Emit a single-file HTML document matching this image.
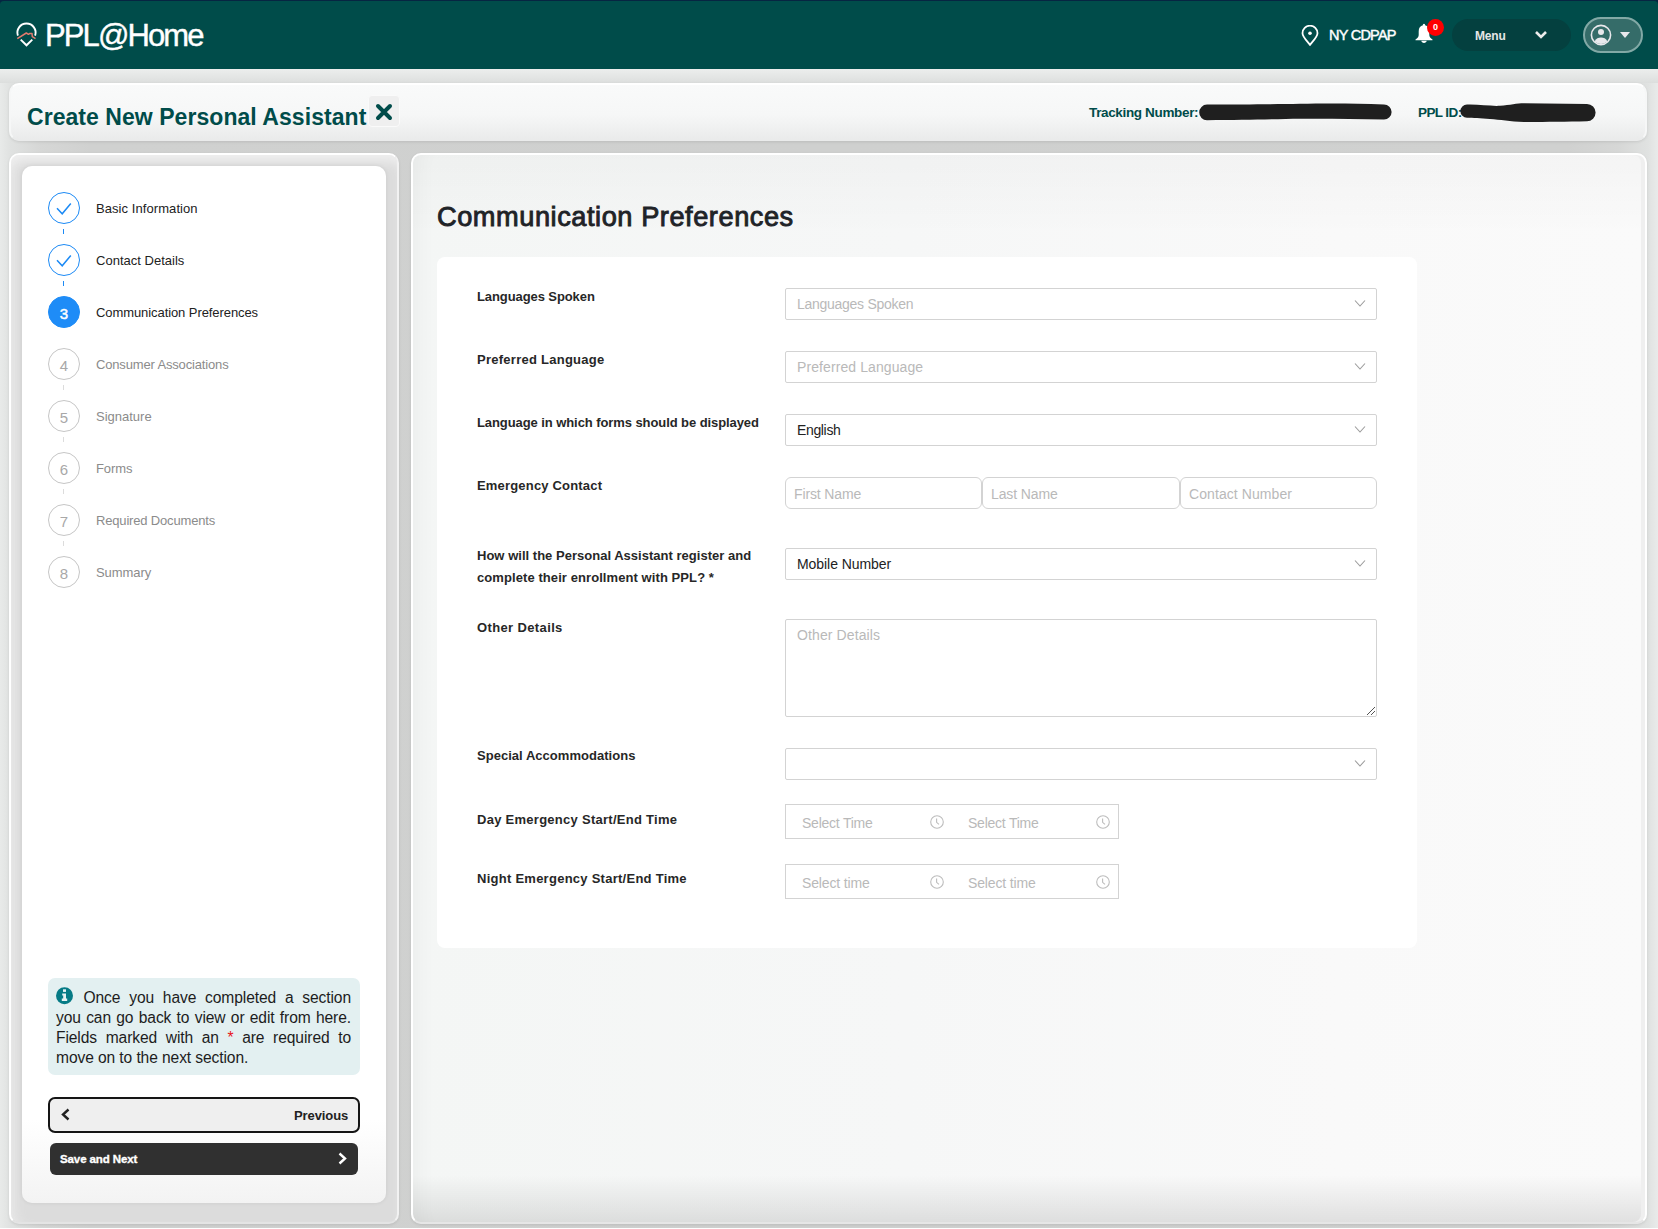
<!DOCTYPE html>
<html><head><meta charset="utf-8">
<style>
*{box-sizing:border-box;margin:0;padding:0}
html,body{width:1658px;height:1229px;overflow:hidden}
body{font-family:"Liberation Sans",sans-serif;background:linear-gradient(to right,#e8eae9 0,#e0e2e1 10px,#d6d7d6 40px,#d0d1d0 90px,#cfd0cf 50%,#d0d1d0 calc(100% - 90px),#d6d7d6 calc(100% - 40px),#e0e2e1 calc(100% - 10px),#e9ebea 100%);position:relative}
#topband{left:0;top:69px;width:1658px;height:14px;background:linear-gradient(#eceeed,#e3e5e4 60%,#dcdedd)}
.abs{position:absolute}
#hdr{left:0;top:0;width:1658px;height:69px;background:#004c4a;border-top:1px solid #062542;border-radius:4px 4px 0 0}
#hdrbg{left:0;top:0;width:1658px;height:8px;background:#062542}
#logo{left:12px;top:18px}
#brand{left:45px;top:18.5px;color:#fff;font-size:31px;letter-spacing:-1.9px;line-height:34px;-webkit-text-stroke:0.4px #fff}
#loc{left:1301px;top:25px}
#loctxt{left:1329px;top:27px;color:#fff;font-weight:normal;font-size:14.5px;letter-spacing:-0.75px;line-height:16px;-webkit-text-stroke:0.45px #fff}
#bell{left:1414px;top:23px}
#badge{left:1427px;top:18.5px;width:17px;height:17px;border-radius:50%;background:#fe0000;color:#fff;font-size:9px;font-weight:bold;text-align:center;line-height:17px}
#menu{left:1452px;top:19px;width:119px;height:32px;border-radius:16px;background:#04403f}
#menutxt{left:1475px;top:29px;color:#e6e6e6;font-weight:bold;font-size:12px;line-height:14px;letter-spacing:-0.2px}
#menuchev{left:1534px;top:30px}
#av{left:1583px;top:17px;width:60px;height:36px;border-radius:18px;background:#356c69;border:2px solid #82a9a6}

.card{background:#f6f7f7;border-radius:10px;box-shadow:0 1px 3px rgba(0,0,0,.10);border:2px solid #fff}
#tcard{left:9px;top:83px;width:1638px;height:58px;background:linear-gradient(#f9fafa 0,#f6f7f7 55%,#eaebeb 100%);border-color:#fff #f6f7f7 #eaebeb #f6f7f7}
#ttl{left:27px;top:103px;color:#004c4a;font-weight:bold;font-size:23px;line-height:28px;letter-spacing:0.05px}
#xbtn{left:368px;top:95px;width:32px;height:32px;background:#efefef;border:1px solid #fafafa;border-radius:4px}
#trk{left:1089px;top:104.5px;color:#004c4a;font-weight:bold;font-size:13.5px;line-height:16px;letter-spacing:-0.35px}
#pplid{left:1418px;top:104.5px;color:#004c4a;font-weight:bold;font-size:13.5px;line-height:16px;letter-spacing:-0.6px}

#side{left:9px;top:153px;width:390px;height:1071px;background:#dcdcdc;box-shadow:0 1px 3px rgba(0,0,0,.10),inset 0 12px 12px -6px #f0f0f0,inset 12px 0 12px -8px #e8e8e8;border-bottom-color:#e4e4e4;border-right-color:#f2f2f2}
#sidein{left:22px;top:166px;width:364px;height:1037px;background:linear-gradient(#fff 0,#fff 92%,#f3f3f3 100%);border-radius:10px;box-shadow:0 0 4px rgba(0,0,0,.08)}
#main{left:411px;top:153px;width:1236px;height:1071px;background:linear-gradient(rgba(0,0,0,.025) 0,rgba(0,0,0,0) 80px,rgba(0,0,0,0) 1020px,rgba(0,0,0,.1) 100%),linear-gradient(to right,#f4f6f5 0,#f6f7f7 40%,#f9f9f9 75%,#fafafa 100%);box-shadow:0 1px 3px rgba(0,0,0,.10),inset 24px 0 20px -18px rgba(0,0,0,.035),inset -4px 0 0 0 #efefef;border-bottom-color:#e6e6e6}

.step{position:absolute;left:48px;width:32px;height:32px;border-radius:50%;border:1px solid #c6c6c6;color:#a8a8a8;font-size:15px;text-align:center;line-height:34px}
.step.done{border-color:#1c8af5}
.step.cur{background:#1e8cf7;border-color:#1e8cf7;color:#fff;-webkit-text-stroke:0.5px #fff;line-height:33px}
.slab{position:absolute;left:96px;font-size:13px;line-height:18px;color:#8b8b8b;letter-spacing:-0.05px}
.slab.dk{color:#222}
.dash{position:absolute;left:63px;width:1px;height:5px;background:#dcdcdc}
.dash.b{background:#1c8af5}

#info{left:48px;top:978px;width:312px;height:97px;background:#e3f0f1;border-radius:7px}
#infotxt{left:56px;top:988px;width:295px;font-size:15.6px;line-height:20px;color:#1d1d1d;text-align:justify;letter-spacing:-0.1px}
#prev{left:48px;top:1097px;width:312px;height:36px;background:#efefef;border:2px solid #151515;border-radius:7px}
#prevtxt{left:294px;top:1107.5px;font-weight:bold;font-size:13px;line-height:16px;color:#222;letter-spacing:-0.1px}
#save{left:50px;top:1143px;width:308px;height:32px;background:#303030;border-radius:6px}
#savetxt{left:60px;top:1152px;font-weight:bold;font-size:11.5px;line-height:14px;color:#fff;letter-spacing:-0.1px;-webkit-text-stroke:0.35px #fff}

#cph{left:437px;top:201px;font-weight:normal;font-size:27.2px;line-height:32px;color:#1f2327;letter-spacing:0.55px;-webkit-text-stroke:0.9px #1f2327}
#form{left:437px;top:257px;width:980px;height:691px;background:#fff;border-radius:8px}
.lab{position:absolute;left:477px;font-weight:bold;font-size:13px;line-height:22px;color:#272727;letter-spacing:-0.05px}
.fld{position:absolute;left:785px;width:592px;height:32px;border:1px solid #d3d3d3;border-radius:2px;background:#fff}
.ph{position:absolute;font-size:14px;line-height:16px;color:#b9b9b9;letter-spacing:-0.1px}
.val{position:absolute;font-size:14px;line-height:16px;color:#222;letter-spacing:-0.1px}
.chev{position:absolute}
.inp{position:absolute;height:32px;border:1px solid #d3d3d3;border-radius:6px;background:#fff}
.tbox{position:absolute;left:785px;width:334px;height:35px;border:1px solid #d3d3d3;background:#fff}
</style></head><body>

<div id="hdrbg" class="abs"></div>
<div id="hdr" class="abs"></div>
<svg id="logo" class="abs" width="30" height="32" viewBox="0 0 30 32">
  <path d="M5.9 17.6 A9.1 9.1 0 1 1 23.1 17.6" fill="none" stroke="#fff" stroke-width="1.9"/>
  <path d="M8.7 21.6 L14.5 27.3 L20.3 21.6" fill="none" stroke="#fff" stroke-width="1.9"/>
  <path d="M5.3 20.6 L14.3 15 L16.5 16.3 L17.8 15.4 L20 15.4 L20.3 18.6 L23.5 20.6" fill="none" stroke="#e27a6e" stroke-width="1.5" stroke-linejoin="round"/>
</svg>
<div id="brand" class="abs">PPL@Home</div>

<svg id="loc" class="abs" width="18" height="21" viewBox="0 0 18 21">
  <path d="M9 19.8 C5 15 1.5 11.5 1.5 8.2 A7.5 7.5 0 0 1 16.5 8.2 C16.5 11.5 13 15 9 19.8 Z" fill="none" stroke="#fff" stroke-width="1.8"/>
  <circle cx="9" cy="8.3" r="1.8" fill="#fff"/>
</svg>
<div id="loctxt" class="abs">NY CDPAP</div>
<svg id="bell" class="abs" width="20" height="22" viewBox="0 0 20 22">
  <path d="M10 0.8 C10.9 0.8 11.2 1.6 11.1 2.3 C13.8 2.9 15.3 5.2 15.3 8.3 L15.3 12 C15.3 13.8 16.5 15.3 18.5 16.6 L18.5 17.2 L1.5 17.2 L1.5 16.6 C3.5 15.3 4.7 13.8 4.7 12 L4.7 8.3 C4.7 5.2 6.2 2.9 8.9 2.3 C8.8 1.6 9.1 0.8 10 0.8 Z" fill="#fff"/>
  <path d="M7.3 17.8 L12.7 17.8 C12.5 19.2 11.5 19.9 10 19.9 C8.5 19.9 7.5 19.2 7.3 17.8 Z" fill="#fff"/>
</svg>
<div id="badge" class="abs">0</div>
<div id="menu" class="abs"></div>
<div id="menutxt" class="abs">Menu</div>
<svg id="menuchev" class="abs" width="14" height="10" viewBox="0 0 14 10"><path d="M2 2 L7 7 L12 2" fill="none" stroke="#ececec" stroke-width="2.6"/></svg>
<div id="av" class="abs"></div>
<svg class="abs" style="left:1590px;top:24px" width="22" height="22" viewBox="0 0 22 22">
  <circle cx="11" cy="11" r="9.6" fill="none" stroke="#e8e8ec" stroke-width="1.6"/>
  <circle cx="11" cy="8" r="3" fill="#e8e8ec"/>
  <path d="M4.6 17.5 C6 14.6 8.5 13.6 11 13.6 C13.5 13.6 16 14.6 17.4 17.5 A9.6 9.6 0 0 1 4.6 17.5 Z" fill="#e8e8ec"/>
</svg>
<svg class="abs" style="left:1620px;top:32px" width="10" height="6" viewBox="0 0 10 6"><path d="M0 0 L10 0 L5 6 Z" fill="#e8e8ec"/></svg>

<div id="topband" class="abs"></div>
<div id="tcard" class="abs card"></div>
<div id="ttl" class="abs">Create New Personal Assistant</div>
<div id="xbtn" class="abs"></div>
<svg class="abs" style="left:375px;top:103px" width="18" height="18" viewBox="0 0 18 18"><path d="M3 3 L15 15 M15 3 L3 15" stroke="#004c4a" stroke-width="4" stroke-linecap="round"/></svg>
<div id="trk" class="abs">Tracking Number:</div>
<svg class="abs" style="left:1195px;top:100px" width="205" height="26" viewBox="0 0 205 26"><path d="M12 4.6 C50 4.3 80 4.3 105 3.8 C130 3.3 160 3.3 189 4.4 A7.6 7.6 0 0 1 189 19.6 C160 19 130 18.5 105 18.8 C80 19.2 50 20 12 20.2 A7.8 7.8 0 0 1 12 4.6 Z" fill="#1f1f1f"/></svg>
<div id="pplid" class="abs">PPL ID:</div>
<svg class="abs" style="left:1455px;top:98px" width="150" height="28" viewBox="0 0 150 28"><path d="M12 6.6 C25 6.3 35 8.3 45 7.8 C55 7 62 5.2 69 5.2 L132 6 A8.6 8.6 0 0 1 132 23.2 C110 23.6 85 24 69 23.9 C55 23.6 45 21.6 35 21 C25 20.4 18 20 12 19.8 A6.6 6.6 0 0 1 12 6.6 Z" fill="#1f1f1f"/></svg>

<div id="side" class="abs card"></div>
<div id="sidein" class="abs"></div>
<div id="main" class="abs card"></div>

<!-- steps -->
<div class="step done" style="top:192px"></div>
<svg class="abs" style="left:56px;top:200px" width="16" height="16" viewBox="0 0 16 16"><path d="M1 8.3 L6.2 13.8 L14.8 3.5" fill="none" stroke="#1c8af5" stroke-width="1.5"/></svg>
<div class="slab dk" style="top:200px;letter-spacing:0.07px">Basic Information</div>
<div class="dash b" style="top:229px"></div>
<div class="step done" style="top:244px"></div>
<svg class="abs" style="left:56px;top:252px" width="16" height="16" viewBox="0 0 16 16"><path d="M1 8.3 L6.2 13.8 L14.8 3.5" fill="none" stroke="#1c8af5" stroke-width="1.5"/></svg>
<div class="slab dk" style="top:252px;letter-spacing:0.01px">Contact Details</div>
<div class="dash b" style="top:281px"></div>
<div class="step cur" style="top:296px">3</div>
<div class="slab dk" style="top:304px;letter-spacing:-0.08px">Communication Preferences</div>
<div class="step" style="top:348px">4</div>
<div class="slab" style="top:356px;letter-spacing:-0.16px">Consumer Associations</div>
<div class="dash" style="top:385px"></div>
<div class="step" style="top:400px">5</div>
<div class="slab" style="top:408px;letter-spacing:0px">Signature</div>
<div class="dash" style="top:437px"></div>
<div class="step" style="top:452px">6</div>
<div class="slab" style="top:460px;letter-spacing:-0.1px">Forms</div>
<div class="dash" style="top:489px"></div>
<div class="step" style="top:504px">7</div>
<div class="slab" style="top:512px;letter-spacing:-0.17px">Required Documents</div>
<div class="dash" style="top:541px"></div>
<div class="step" style="top:556px">8</div>
<div class="slab" style="top:564px;letter-spacing:-0.07px">Summary</div>

<div id="info" class="abs"></div>
<svg class="abs" style="left:56px;top:987px" width="18" height="18" viewBox="0 0 18 18"><circle cx="8.5" cy="8.7" r="8.5" fill="#067b86"/><rect x="7" y="2.3" width="3" height="2.6" fill="#e6f2f3"/><path d="M6.2 6.4 H10 V11.6 H11.2 V14 H5.8 V11.6 H7.2 V8.4 H6.2 Z" fill="#e6f2f3"/></svg>
<div id="infotxt" class="abs"><span style="display:inline-block;width:27.5px"></span>Once you have completed a section you can go back to view or edit from here. Fields marked with an <span style="color:#e8141a">*</span> are required to move on to the next section.</div>
<div id="prev" class="abs"></div>
<svg class="abs" style="left:60px;top:1108px" width="11" height="13" viewBox="0 0 11 13"><path d="M8.5 1.5 L3 6.5 L8.5 11.5" fill="none" stroke="#222" stroke-width="2.4"/></svg>
<div id="prevtxt" class="abs">Previous</div>
<div id="save" class="abs"></div>
<div id="savetxt" class="abs">Save and Next</div>
<svg class="abs" style="left:337px;top:1152px" width="11" height="13" viewBox="0 0 11 13"><path d="M2.5 1.5 L8 6.5 L2.5 11.5" fill="none" stroke="#fff" stroke-width="2.4"/></svg>

<!-- main -->
<div id="cph" class="abs">Communication Preferences</div>
<div id="form" class="abs"></div>
<div class="lab" style="top:285.5px;letter-spacing:-0.09px">Languages Spoken</div>
<div class="fld" style="top:288px"></div>
<div class="ph" style="left:797px;top:296.3px;letter-spacing:-0.28px">Languages Spoken</div>
<svg class="chev" style="left:1354px;top:299px" width="12" height="9" viewBox="0 0 12 9"><path d="M1 1.5 L6 7 L11 1.5" fill="none" stroke="#9c9c9c" stroke-width="1.1"/></svg>
<div class="lab" style="top:348.8px;letter-spacing:0.26px">Preferred Language</div>
<div class="fld" style="top:351px"></div>
<div class="ph" style="left:797px;top:359.3px;letter-spacing:0.09px">Preferred Language</div>
<svg class="chev" style="left:1354px;top:362px" width="12" height="9" viewBox="0 0 12 9"><path d="M1 1.5 L6 7 L11 1.5" fill="none" stroke="#9c9c9c" stroke-width="1.1"/></svg>
<div class="lab" style="top:411.7px;letter-spacing:-0.08px">Language in which forms should be displayed</div>
<div class="fld" style="top:414px"></div>
<div class="val" style="left:797px;top:422.3px;letter-spacing:-0.35px">English</div>
<svg class="chev" style="left:1354px;top:425px" width="12" height="9" viewBox="0 0 12 9"><path d="M1 1.5 L6 7 L11 1.5" fill="none" stroke="#9c9c9c" stroke-width="1.1"/></svg>
<div class="lab" style="top:474.5px;letter-spacing:0.18px">Emergency Contact</div>
<div class="inp" style="left:785px;top:477px;width:197px"></div>
<div class="inp" style="left:982px;top:477px;width:198px"></div>
<div class="inp" style="left:1180px;top:477px;width:197px"></div>
<div class="ph" style="left:794px;top:485.8px;letter-spacing:-0.13px">First Name</div>
<div class="ph" style="left:991px;top:485.8px;letter-spacing:-0.1px">Last Name</div>
<div class="ph" style="left:1189px;top:485.8px;letter-spacing:0.08px">Contact Number</div>
<div class="lab" style="top:545.3px"><span style="letter-spacing:0.02px">How will the Personal Assistant register and</span><br><span style="letter-spacing:0.08px">complete their enrollment with PPL? *</span></div>
<div class="fld" style="top:548px"></div>
<div class="val" style="left:797px;top:556.3px;letter-spacing:-0.06px">Mobile Number</div>
<svg class="chev" style="left:1354px;top:559px" width="12" height="9" viewBox="0 0 12 9"><path d="M1 1.5 L6 7 L11 1.5" fill="none" stroke="#9c9c9c" stroke-width="1.1"/></svg>
<div class="lab" style="top:616.8px;letter-spacing:0.37px">Other Details</div>
<div class="fld" style="top:619px;height:98px"></div>
<div class="ph" style="left:797px;top:627.3px;letter-spacing:0.11px">Other Details</div>
<svg class="chev" style="left:1366px;top:706px" width="10" height="10" viewBox="0 0 10 10"><path d="M1 9 L9 1 M5 9 L9 5" stroke="#555" stroke-width="1"/></svg>
<div class="lab" style="top:745.3px;letter-spacing:0.03px">Special Accommodations</div>
<div class="fld" style="top:748px"></div>
<svg class="chev" style="left:1354px;top:759px" width="12" height="9" viewBox="0 0 12 9"><path d="M1 1.5 L6 7 L11 1.5" fill="none" stroke="#9c9c9c" stroke-width="1.1"/></svg>
<div class="lab" style="top:808.6px;letter-spacing:0.27px">Day Emergency Start/End Time</div>
<div class="tbox" style="top:804px"></div>
<div class="ph" style="left:802px;top:814.6px;letter-spacing:-0.23px">Select Time</div>
<div class="ph" style="left:968px;top:814.6px;letter-spacing:-0.23px">Select Time</div>
<svg class="chev" style="left:929px;top:814px" width="16" height="16" viewBox="0 0 16 16"><circle cx="8" cy="8" r="6.3" fill="none" stroke="#bdbdbd" stroke-width="1.1"/><path d="M7.6 4.6 V8.3 L10 10.4" fill="none" stroke="#bdbdbd" stroke-width="1.1"/></svg>
<svg class="chev" style="left:1095px;top:814px" width="16" height="16" viewBox="0 0 16 16"><circle cx="8" cy="8" r="6.3" fill="none" stroke="#bdbdbd" stroke-width="1.1"/><path d="M7.6 4.6 V8.3 L10 10.4" fill="none" stroke="#bdbdbd" stroke-width="1.1"/></svg>
<div class="lab" style="top:868.2px;letter-spacing:0.26px">Night Emergency Start/End Time</div>
<div class="tbox" style="top:864px"></div>
<div class="ph" style="left:802px;top:874.6px;letter-spacing:-0.14px">Select time</div>
<div class="ph" style="left:968px;top:874.6px;letter-spacing:-0.14px">Select time</div>
<svg class="chev" style="left:929px;top:874px" width="16" height="16" viewBox="0 0 16 16"><circle cx="8" cy="8" r="6.3" fill="none" stroke="#bdbdbd" stroke-width="1.1"/><path d="M7.6 4.6 V8.3 L10 10.4" fill="none" stroke="#bdbdbd" stroke-width="1.1"/></svg>
<svg class="chev" style="left:1095px;top:874px" width="16" height="16" viewBox="0 0 16 16"><circle cx="8" cy="8" r="6.3" fill="none" stroke="#bdbdbd" stroke-width="1.1"/><path d="M7.6 4.6 V8.3 L10 10.4" fill="none" stroke="#bdbdbd" stroke-width="1.1"/></svg>

<div class="abs" style="left:0;top:1228px;width:1658px;height:1px;background:#fff"></div>
</body></html>
